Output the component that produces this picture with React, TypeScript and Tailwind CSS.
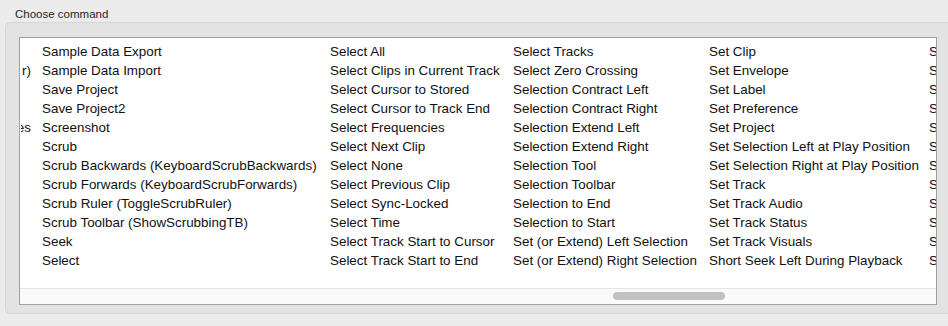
import React from "react";

// 命令列表 - 按列排列
const columns: { width: string; items: string[] }[] = [
  {
    width: "w-[288px]",
    items: [
      "Sample Data Export",
      "Sample Data Import",
      "Save Project",
      "Save Project2",
      "Screenshot",
      "Scrub",
      "Scrub Backwards (KeyboardScrubBackwards)",
      "Scrub Forwards (KeyboardScrubForwards)",
      "Scrub Ruler (ToggleScrubRuler)",
      "Scrub Toolbar (ShowScrubbingTB)",
      "Seek",
      "Select",
    ],
  },
  {
    width: "w-[183px]",
    items: [
      "Select All",
      "Select Clips in Current Track",
      "Select Cursor to Stored",
      "Select Cursor to Track End",
      "Select Frequencies",
      "Select Next Clip",
      "Select None",
      "Select Previous Clip",
      "Select Sync-Locked",
      "Select Time",
      "Select Track Start to Cursor",
      "Select Track Start to End",
    ],
  },
  {
    width: "w-[196px]",
    items: [
      "Select Tracks",
      "Select Zero Crossing",
      "Selection Contract Left",
      "Selection Contract Right",
      "Selection Extend Left",
      "Selection Extend Right",
      "Selection Tool",
      "Selection Toolbar",
      "Selection to End",
      "Selection to Start",
      "Set (or Extend) Left Selection",
      "Set (or Extend) Right Selection",
    ],
  },
  {
    width: "w-[220px]",
    items: [
      "Set Clip",
      "Set Envelope",
      "Set Label",
      "Set Preference",
      "Set Project",
      "Set Selection Left at Play Position",
      "Set Selection Right at Play Position",
      "Set Track",
      "Set Track Audio",
      "Set Track Status",
      "Set Track Visuals",
      "Short Seek Left During Playback",
    ],
  },
  {
    width: "w-[200px]",
    items: [
      "Short Seek Right During Playback",
      "Show Clipping",
      "Show Extra Menus",
      "Show Label Toolbar",
      "Show Sync Lock",
      "Silence",
      "Silence Finder",
      "Sliding Stretch",
      "Snap To",
      "Snap To Nearest",
      "Sound Finder",
      "Spectral Edit",
    ],
  },
];

// 左侧被裁切的上一列（只露出结尾）
const prevColumn = ["", "Ruler (Ruler r)", "", "", "Preferences", "", "", "", "", "", "", ""];

export default function App() {
  return (
    <div className="w-[948px] h-[326px] overflow-hidden bg-[#ececec] pt-[6px] font-['Liberation_Sans',Arial,sans-serif]">
      <div className="pl-[15px] text-[11.5px] leading-[16px] text-[#262626]">
        Choose command
      </div>

      {/* 分组框 */}
      <div className="ml-[5px] w-[960px] h-[292px] rounded-[5px] border border-[#d6d6d6] bg-[#e3e3e3] pt-[14px] pl-[13px]">
        {/* 列表框 */}
        <div className="w-[918px] h-[268px] border border-[#a0a0a0] bg-white flex flex-col">
          <div className="flex-1 flex overflow-hidden pt-[4px] text-[13.4px] leading-[19px] text-[#111]">
            <div className="ml-[1px] w-[21px] shrink-0 pr-[11px] flex flex-col items-end overflow-hidden">
              {prevColumn.map((t, i) => (
                <div key={i} className="h-[19px] whitespace-nowrap">
                  {t}
                </div>
              ))}
            </div>
            {columns.map((col, ci) => (
              <div key={ci} className={`shrink-0 flex flex-col overflow-hidden ${col.width}`}>
                {col.items.map((t) => (
                  <div key={t} className="h-[19px] whitespace-nowrap">
                    {t}
                  </div>
                ))}
              </div>
            ))}
          </div>

          {/* 横向滚动条 */}
          <div className="h-[16px] shrink-0 border-t border-[#e4e4e4] bg-[#fafafa] pl-[593px] pt-[3px]">
            <div className="w-[112px] h-[8px] rounded-full bg-[#c1c1c1]" />
          </div>
        </div>
      </div>
    </div>
  );
}
